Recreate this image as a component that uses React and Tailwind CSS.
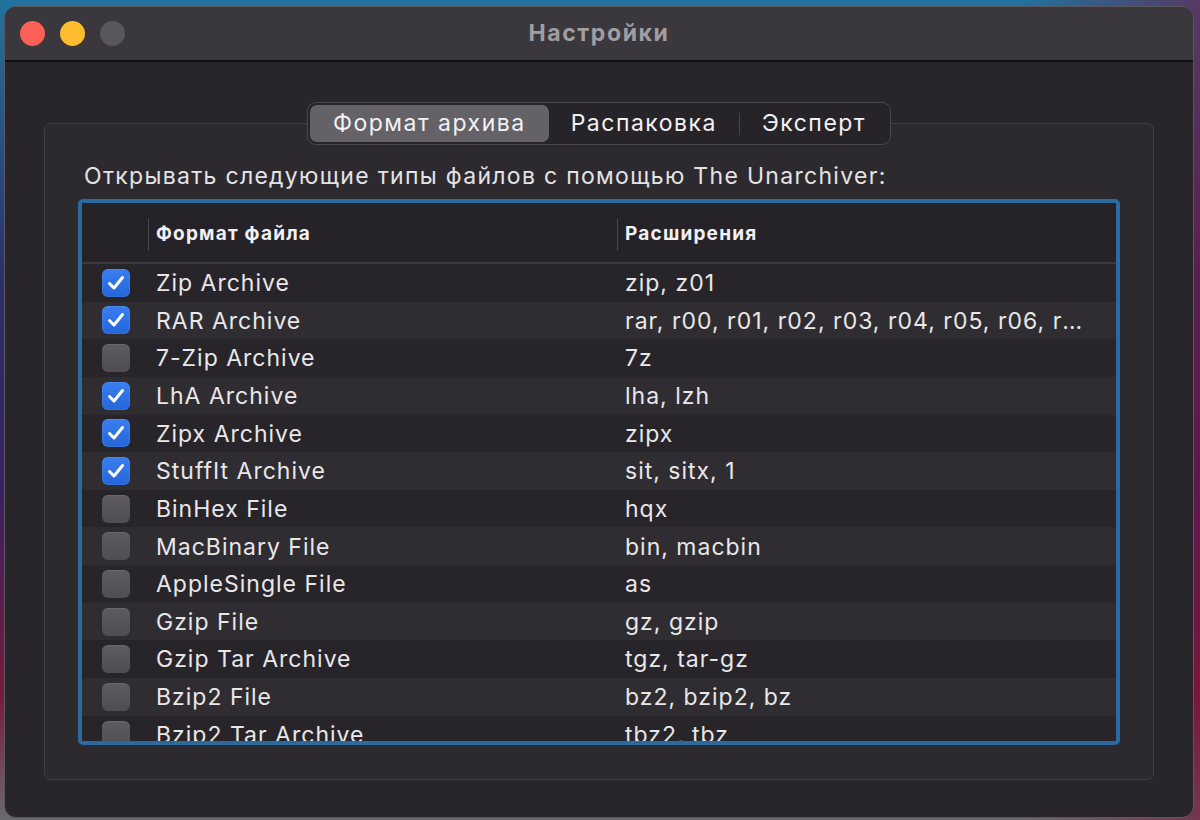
import React from "react";

const rows = [
  ["Zip Archive", "zip, z01", true],
  ["RAR Archive", "rar, r00, r01, r02, r03, r04, r05, r06, r07, r08, r09", true],
  ["7-Zip Archive", "7z", false],
  ["LhA Archive", "lha, lzh", true],
  ["Zipx Archive", "zipx", true],
  ["StuffIt Archive", "sit, sitx, 1", true],
  ["BinHex File", "hqx", false],
  ["MacBinary File", "bin, macbin", false],
  ["AppleSingle File", "as", false],
  ["Gzip File", "gz, gzip", false],
  ["Gzip Tar Archive", "tgz, tar-gz", false],
  ["Bzip2 File", "bz2, bzip2, bz", false],
  ["Bzip2 Tar Archive", "tbz2, tbz", false],
];

function Checkbox({ checked }) {
  if (checked) {
    return (
      <div className="w-[28px] h-[28px] rounded-[6px] bg-[linear-gradient(#3a7ff0,#2465d8)] flex items-center justify-center shadow-[inset_0_0_0_1px_rgba(255,255,255,0.08)]">
        <svg width="22" height="22" viewBox="0 0 22 22" fill="none">
          <path d="M4.5 11.5 L9 16 L17.5 5.5" stroke="white" strokeWidth="3" strokeLinecap="round" strokeLinejoin="round" />
        </svg>
      </div>
    );
  }
  return (
    <div className="w-[28px] h-[28px] rounded-[6px] bg-[linear-gradient(#5e5c60,#4f4d51)] shadow-[inset_0_1px_0_rgba(255,255,255,0.08)]" />
  );
}

export default function App() {
  return (
    <div
      className="w-[1200px] h-[820px] overflow-hidden pt-[6px] pl-[4px] pr-[6px] pb-[2px] bg-[linear-gradient(90deg,transparent_0%,transparent_85%,rgba(120,20,60,0.6)_100%),linear-gradient(180deg,#21739f_0%,#2b2e6a_35%,#3a2063_60%,#7a1a3c_85%,#6a6a70_100%)]"
      style={{ fontFamily: "Inter, 'Noto Sans', sans-serif" }}
    >
      <div className="w-full h-full rounded-[12px] bg-[#29262b] border border-[#5a585c] overflow-hidden flex flex-col">
        {/* Title bar */}
        <div className="h-[55px] shrink-0 bg-[#3a383c] border-b-2 border-[#0f0e10] relative flex items-center justify-center">
          <div className="absolute left-[15px] top-[14px] flex gap-[15px]">
            <div className="w-[25px] h-[25px] rounded-full bg-[#fe5f57]" />
            <div className="w-[25px] h-[25px] rounded-full bg-[#febc2e]" />
            <div className="w-[25px] h-[25px] rounded-full bg-[#59575b]" />
          </div>
          <div className="text-[23px] font-bold text-[#a09ea2] tracking-[1.6px]">Настройки</div>
        </div>

        {/* Body */}
        <div className="flex-1 flex flex-col px-[39px] pt-[40px] pb-[37px]">
          <div className="relative z-10 flex justify-center">
            <div className="h-[43px] flex items-center rounded-[9px] border border-[#4a474d] bg-[#272429] p-[2px]">
              <div className="h-full px-[23px] rounded-[7px] bg-[#656267] flex items-center text-[23px] tracking-[1.5px] text-[#f2f1f3]">
                Формат архива
              </div>
              <div className="h-full px-[22px] flex items-center text-[23px] tracking-[1.5px] text-[#f2f1f3]">Распаковка</div>
              <div className="w-px h-[22px] bg-[#464349]" />
              <div className="h-full px-[22px] flex items-center text-[23px] tracking-[1.5px] text-[#f2f1f3]">Эксперт</div>
            </div>
          </div>

          <div className="-mt-[22px] flex-1 rounded-[7px] border border-[#413e44] bg-[#2d2a2f] px-[33px] pt-[38px] flex flex-col">
            <div className="text-[23px] tracking-[1.3px] text-[#e4e3e6] pl-[6px] leading-[28px]">
              Открывать следующие типы файлов с помощью The Unarchiver:
            </div>
            <div className="mt-[9px] h-[546px] rounded-[5px] border-[4px] border-[#2a6a9c] bg-[#28252a] overflow-hidden flex flex-col">
              {/* Header */}
              <div className="h-[61px] shrink-0 flex items-center border-b-2 border-[#3b383e] bg-[#262328] pt-[4px]">
                <div className="w-[66px] h-full" />
                <div className="w-px h-[32px] bg-[#4a474d]" />
                <div className="w-[468px] pl-[7px] text-[19px] tracking-[1.2px] font-bold text-[#f1f0f2]">Формат файла</div>
                <div className="w-px h-[32px] bg-[#4a474d]" />
                <div className="flex-1 pl-[7px] text-[19px] tracking-[1.2px] font-bold text-[#f1f0f2]">Расширения</div>
              </div>
              {rows.map(([name, ext, checked], i) => (
                <div
                  key={name}
                  className={
                    "h-[37.65px] shrink-0 flex items-center text-[23px] tracking-[1px] text-[#e8e7e9] " +
                    (i % 2 === 0 ? "bg-[#28252a]" : "bg-[#302d32]")
                  }
                >
                  <div className="w-[66px] flex justify-center pl-[1px]">
                    <Checkbox checked={checked} />
                  </div>
                  <div className="w-[469px] pl-[8px] pt-[1px] whitespace-nowrap">{name}</div>
                  <div className="flex-1 min-w-0 pl-[8px] pt-[1px] pr-[28px] whitespace-nowrap overflow-hidden text-ellipsis">
                    {ext}
                  </div>
                </div>
              ))}
            </div>
          </div>
        </div>
      </div>
    </div>
  );
}
